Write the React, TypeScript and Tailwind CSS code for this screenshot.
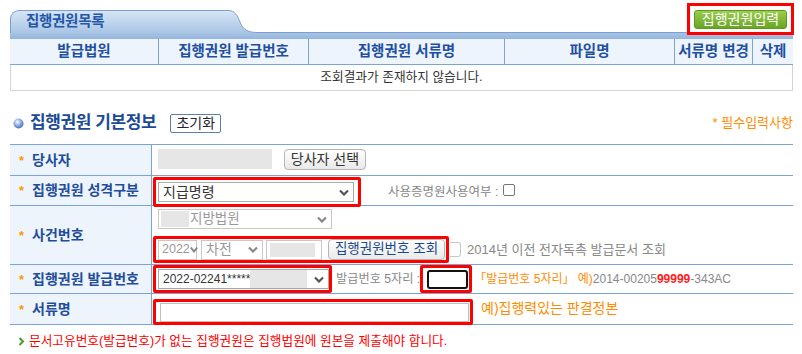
import { ReactNode } from "react";

const FONT = { fontFamily: '"Liberation Sans", "Noto Sans CJK KR", sans-serif' };

const Chevron = ({ color = "#555", w = 10 }: { color?: string; w?: number }) => (
	<svg width={w} height="7" viewBox="0 0 10 7" preserveAspectRatio="none" className="shrink-0">
		<path d="M1 1.5 L5 5.5 L9 1.5" stroke={color} strokeWidth="2.2" fill="none" />
	</svg>
);

const Select = ({
	w,
	children,
	disabled,
	tight,
	size = "text-[14px]",
}: {
	w: string;
	children: ReactNode;
	disabled?: boolean;
	tight?: boolean;
	size?: string;
}) => (
	<div
		className={`${w} h-[20px] flex items-center justify-between border bg-white ${tight ? "pl-[3px] pr-[1px]" : "pl-[4px] pr-[4px]"} ${size} ${
			disabled ? "text-[#999] border-[#c8c8c8]" : "text-[#333] border-[#a9a9a9]"
		}`}>
		<div className="flex items-center whitespace-nowrap">{children}</div>
		<Chevron color={disabled ? "#888" : "#555"} w={tight ? 8 : 10} />
	</div>
);

const RedBox = ({ children, className = "" }: { children: ReactNode; className?: string }) => (
	<div className={`relative z-10 shrink-0 border-[3px] border-[#ff0000] rounded-[2px] flex items-center ${className}`}>{children}</div>
);

const Label = ({ children }: { children: ReactNode }) => (
	<div className="w-[142px] shrink-0 bg-[#eef4fb] border-r border-[#7ba3d6] flex items-center pl-[9px]">
		<span className="text-[#ff9900] text-[13px] font-bold w-[13px] leading-none">*</span>
		<span className="text-[14px] font-bold text-[#1f4d9c]">{children}</span>
	</div>
);

const GrayButton = ({ children, className = "" }: { children: ReactNode; className?: string }) => (
	<div
		className={`h-[21px] shrink-0 flex items-center justify-center whitespace-nowrap rounded-[4px] border border-[#b5b5b5] bg-gradient-to-b from-white to-[#e9e9e9] ${className}`}>
		{children}
	</div>
);

const cols = [
	{ t: "발급법원", w: "w-[149px]" },
	{ t: "집행권원 발급번호", w: "w-[150px]" },
	{ t: "집행권원 서류명", w: "w-[196px]" },
	{ t: "파일명", w: "w-[170px]" },
	{ t: "서류명 변경", w: "w-[78px]" },
	{ t: "삭제", w: "w-[40px]" },
];

export default function App() {
	return (
		<div className="w-[802px] h-[354px] bg-white overflow-hidden" style={FONT}>
			{/* 목록 */}
			<div className="pl-[10px] pr-[9px]">
				<div className="relative h-[39px] pt-[10px]">
					<div className="flex items-end h-[23px]">
						<div className="w-[218px] h-[23px] rounded-tl-[9px] border-t border-l border-[#7aa0d0] bg-gradient-to-b from-[#d7e5f4] to-[#a9c5e5] flex items-center pl-[15px]">
							<span className="text-[14.5px] font-bold text-[#2457a8] tracking-[-0.3px]">집행권원목록</span>
						</div>
						<svg width="30" height="23" viewBox="0 0 30 23" className="shrink-0">
							<defs>
								<linearGradient id="tabg" x1="0" y1="0" x2="0" y2="1">
									<stop offset="0" stopColor="#d7e5f4" />
									<stop offset="1" stopColor="#a9c5e5" />
								</linearGradient>
							</defs>
							<path d="M0 0.5 C7 0.5 9 5 12 12 C15 20 20 22.5 30 22.5 L30 23 L0 23 Z" fill="url(#tabg)" />
							<path d="M0 0.5 C7 0.5 9 5 12 12 C15 20 20 22.5 30 22.5" stroke="#7aa0d0" fill="none" />
						</svg>
						<div className="flex-1 h-[1px] bg-[#7aa0d0]" />
					</div>
					<div className="h-[6px] bg-gradient-to-b from-[#a7c3e4] to-[#94b6de]" />
					<div className="absolute right-[-1px] top-[3px] border-[3px] border-[#ff0000] p-[4px] pb-[3px]">
						<div className="w-[93px] h-[19px] rounded-[3px] border border-[#5f9a1e] bg-gradient-to-b from-[#9bcd4c] to-[#6aa526] flex items-center justify-center text-white text-[14px]">
							집행권원입력
						</div>
					</div>
				</div>
				<div className="flex h-[26px] bg-[#eef4fb] border-b border-[#7ba3d6]">
					{cols.map((c, i) => (
						<div
							key={c.t}
							className={`${c.w} flex items-center justify-center whitespace-nowrap text-[14.5px] font-bold text-[#1e50a2] ${
								i < cols.length - 1 ? "border-r border-[#7ba3d6]" : ""
							}`}>
							{c.t}
						</div>
					))}
				</div>
				<div className="h-[26px] flex items-center justify-center border-x border-b border-[#d4d4d4] text-[12.7px] text-[#333]">
					조회결과가 존재하지 않습니다.
				</div>
			</div>

			{/* 기본정보 */}
			<div className="pl-[13px] pr-[9px] mt-[21px] h-[22px] flex items-center">
				<svg width="11" height="11" viewBox="0 0 11 11" className="mr-[6px]">
					<defs>
						<radialGradient id="dot" cx="0.4" cy="0.35" r="0.7">
							<stop offset="0" stopColor="#ffffff" />
							<stop offset="0.35" stopColor="#aac4ee" />
							<stop offset="1" stopColor="#3e63b8" />
						</radialGradient>
					</defs>
					<circle cx="5.5" cy="5.5" r="5" fill="url(#dot)" />
				</svg>
				<span className="text-[17px] font-bold text-[#1c4b96] tracking-[-0.4px]">집행권원 기본정보</span>
				<div className="ml-[14px] h-[19px] w-[51px] flex items-center justify-center border border-[#5b7fae] rounded-[2px] text-[14px] text-[#223]">
					초기화
				</div>
				<div className="ml-auto text-[13px] text-[#ff8c00]">* 필수입력사항</div>
			</div>

			<div className="ml-[10px] mr-[9px] mt-[10px] border-t border-[#7ba3d6] text-[12.5px]">
				{/* 당사자 */}
				<div className="flex h-[31px] border-b border-[#7ba3d6]">
					<Label>당사자</Label>
					<div className="flex items-start pt-[4px] pl-[6px]">
						<div className="w-[114px] h-[20px] bg-[#e6e6e6]" />
						<GrayButton className="ml-[12px] w-[82px] text-[14px] text-[#333]">당사자 선택</GrayButton>
					</div>
				</div>
				{/* 성격구분 */}
				<div className="flex h-[30px] border-b border-[#7ba3d6]">
					<Label>집행권원 성격구분</Label>
					<div className="flex items-start pt-[1px] pl-[1px]">
						<RedBox className="h-[30px] pl-[2px] pr-[4px]">
							<Select w="w-[196px]">지급명령</Select>
						</RedBox>
						<span className="ml-[27px] mt-[6px] whitespace-nowrap text-[#888]">사용증명원사용여부 :</span>
						<div className="ml-[5px] mt-[7px] w-[12px] h-[12px] shrink-0 border border-[#767676] rounded-[2px] bg-white" />
					</div>
				</div>
				{/* 사건번호 */}
				<div className="flex h-[59px] border-b border-[#7ba3d6]">
					<Label>사건번호</Label>
					<div className="flex flex-col pl-[1px]">
						<div className="ml-[5px] mt-[3px]">
							<Select w="w-[174px]" disabled size="text-[13.5px]">
								<span className="w-[28px] h-[16px] bg-[#e6e6e6] mr-[1px] -ml-[2px]" />
								지방법원
							</Select>
						</div>
						<div className="flex items-center mt-[7px]">
							<RedBox className="h-[27px] pl-[2px] pr-[1px] gap-[4px]">
								<Select w="w-[39px]" disabled tight size="text-[12.5px]">
									2022
								</Select>
								<Select w="w-[62px]" disabled>
									차전
								</Select>
								<div className="w-[56px] h-[20px] border border-[#c8c8c8] bg-white flex items-center pl-[3px] -ml-[1px]">
									<div className="w-[45px] h-[14px] bg-[#e6e6e6]" />
								</div>
								<GrayButton className="w-[117px] ml-[2px] text-[13.5px] text-[#1a4a8a] border-[#b0b0b0]">
									집행권원번호 조회
								</GrayButton>
							</RedBox>
							<div className="ml-[1px] w-[11px] h-[15px] border border-[#c8c8c8] rounded-r-[3px] border-l-0 bg-white" />
							<span className="ml-[6px] whitespace-nowrap text-[13px] text-[#888]">2014년 이전 전자독촉 발급문서 조회</span>
						</div>
					</div>
				</div>
				{/* 발급번호 */}
				<div className="flex h-[29px] border-b border-[#7ba3d6]">
					<Label>집행권원 발급번호</Label>
					<div className="flex items-start pl-[1px]">
						<RedBox className="h-[28px] pl-[2px]">
							<Select w="w-[171px]" size="text-[12px]">
								<span className="text-[#333]">2022-02241*****</span>
								<span className="w-[57px] h-[18px] bg-[#e6e6e6]" />
							</Select>
						</RedBox>
						<span className="ml-[4px] mt-[5px] whitespace-nowrap text-[12.2px] text-[#888]">발급번호 5자리 :</span>
						<RedBox className="h-[28px] pl-[4px] pr-[1px]">
							<div className="w-[41px] h-[19px] border-2 border-[#111] rounded-[3px] bg-white" />
						</RedBox>
						<span className="ml-[2px] mt-[5px] whitespace-nowrap text-[12px]">
							<span className="text-[#ff8c00]">「발급번호 5자리」 예)</span>
							<span className="text-[#888]">2014-00205</span>
							<span className="text-[#ff2020] font-bold">99999</span>
							<span className="text-[#888]">-343AC</span>
						</span>
					</div>
				</div>
				{/* 서류명 */}
				<div className="flex h-[31px] border-b border-[#7ba3d6]">
					<Label>서류명</Label>
					<div className="flex items-start pt-[5px] pl-[1px]">
						<RedBox className="h-[26px] w-[320px] pl-[4px]">
							<div className="w-[309px] h-[19px] border border-[#c0c0c0] bg-white" />
						</RedBox>
						<span className="ml-[8px] -mt-[1px] whitespace-nowrap text-[14px] text-[#ff8c00]">예)집행력있는 판결정본</span>
					</div>
				</div>
			</div>

			<div className="pl-[18px] mt-[7px] flex items-center text-[12.7px] text-[#ff0000]">
				<svg width="7" height="9" viewBox="0 0 7 9" className="mr-[4px]">
					<path d="M1.5 1 L5 4.5 L1.5 8" stroke="#4a9a2a" strokeWidth="2" fill="none" />
				</svg>
				문서고유번호(발급번호)가 없는 집행권원은 집행법원에 원본을 제출해야 합니다.
			</div>
		</div>
	);
}
